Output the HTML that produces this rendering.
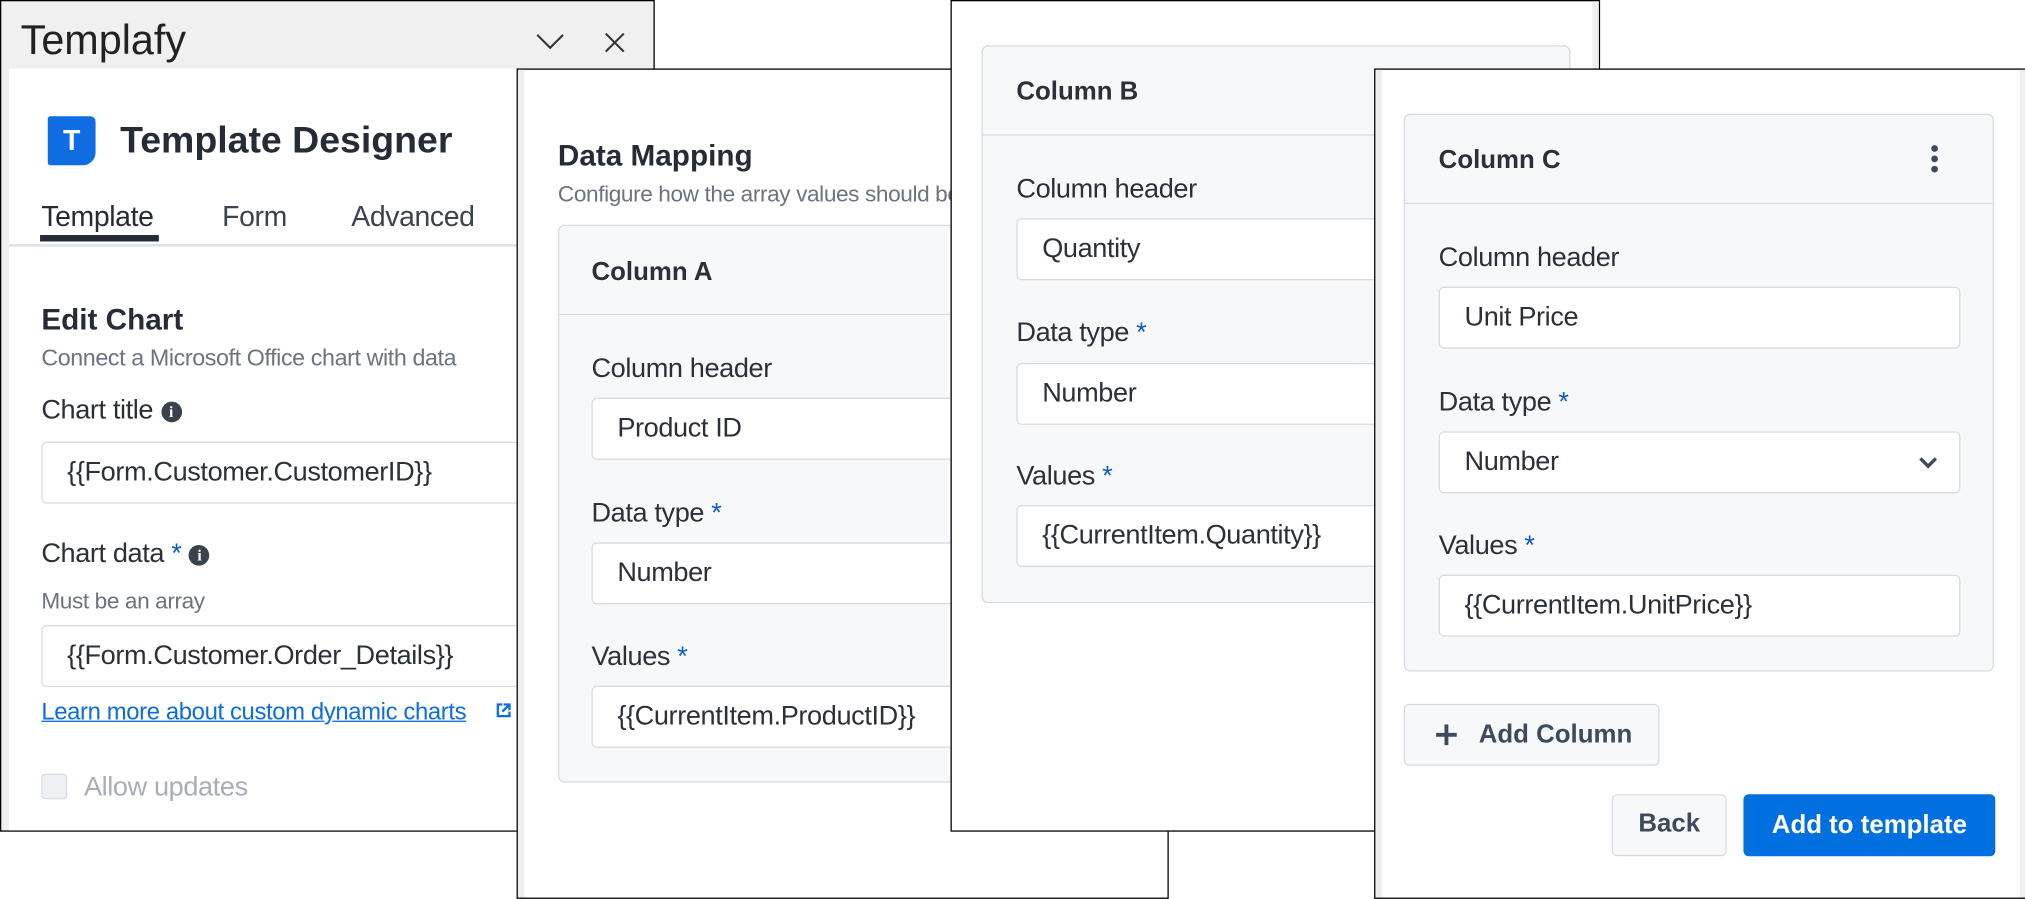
<!DOCTYPE html>
<html><head><meta charset="utf-8"><style>
*{box-sizing:border-box;margin:0;padding:0}
html,body{width:2025px;height:899px;background:#fff;overflow:hidden}
#w{position:absolute;left:0;top:0;width:1568px;height:696px;transform:scale(1.29145);transform-origin:0 0;font-family:"Liberation Sans",sans-serif;color:#2b3039}
.p{position:absolute;background:#fff;border:1px solid #000;overflow:hidden}
.a{position:absolute;white-space:nowrap}
.lbl{font-size:21px;line-height:22px;letter-spacing:-0.3px}
.req{color:#0b5cc4}
.inp{position:absolute;background:#fff;border:1.5px solid #d6dbe2;border-radius:4px;height:48px;font-size:21px;line-height:45px;padding-left:19px;white-space:nowrap;overflow:hidden;letter-spacing:-0.3px}
.card{position:absolute;background:#f7f8fa;border:1.5px solid #d6dbe2;border-radius:5px}
.hd{position:absolute;left:0;right:0;border-bottom:1.5px solid #d6dbe2}
.ttl{font-size:20px;font-weight:bold}
.info{display:inline-block;width:16px;height:16px;border-radius:50%;background:#3a424e;color:#fff;font-size:12px;line-height:16px;text-align:center;font-weight:bold;font-family:"Liberation Serif",serif;vertical-align:1px;margin-left:6px;letter-spacing:0}
.strip{position:absolute;top:0;bottom:0;width:5px;background:#efefef}
</style></head><body><div id="w">

<!-- Panel 1 -->
<div class="p" style="left:0;top:0;width:507px;height:644px;background:#f0f0f0">
  <div class="a" style="left:15px;top:12px;font-size:32px;line-height:36px;color:#222">Templafy</div>
  <svg class="a" style="left:414px;top:24px" width="22" height="14"><path d="M1 2 L11 12 L21 2" fill="none" stroke="#333" stroke-width="1.6"/></svg>
  <svg class="a" style="left:467px;top:24px" width="16" height="16"><path d="M1 1 L15 15 M15 1 L1 15" fill="none" stroke="#333" stroke-width="1.6"/></svg>
  <div class="a" style="left:6px;top:52px;width:500px;height:592px;background:#fff"></div>
  <div class="a" style="left:36px;top:89px;width:37px;height:38px;background:#0e6de0;border-radius:2px 4px 10px 2px;color:#fff;font-weight:bold;font-size:22px;line-height:38px;text-align:center">T</div>
  <div class="a" style="left:92px;top:91px;font-size:29px;line-height:34px;font-weight:bold;color:#262c36">Template Designer</div>
  <div class="a" style="left:31px;top:155px;font-size:22px;line-height:24px;color:#262c36;letter-spacing:-0.3px">Template</div>
  <div class="a" style="left:171px;top:155px;font-size:22px;line-height:24px;color:#3b4350;letter-spacing:-0.3px">Form</div>
  <div class="a" style="left:271px;top:155px;font-size:22px;line-height:24px;color:#3b4350;letter-spacing:-0.3px">Advanced</div>
  <div class="a" style="left:30px;top:181px;width:92px;height:5px;background:#262c36"></div>
  <div class="a" style="left:6px;top:188px;width:500px;height:2px;background:#dde2e8"></div>
  <div class="a" style="left:31px;top:232px;font-size:23px;line-height:28px;font-weight:bold;color:#262c36">Edit Chart</div>
  <div class="a" style="left:31px;top:266px;font-size:18px;line-height:20px;color:#6b7280;letter-spacing:-0.3px">Connect a Microsoft Office chart with data</div>
  <div class="a lbl" style="left:31px;top:306px">Chart title<span class="info">i</span></div>
  <div class="inp" style="left:31px;top:341px;width:400px">{{Form.Customer.CustomerID}}</div>
  <div class="a lbl" style="left:31px;top:417px">Chart data <span class="req">*</span><span class="info">i</span></div>
  <div class="a" style="left:31px;top:454px;font-size:17.5px;line-height:20px;color:#6b7280;letter-spacing:-0.3px">Must be an array</div>
  <div class="inp" style="left:31px;top:483px;width:400px">{{Form.Customer.Order_Details}}</div>
  <div class="a" style="left:31px;top:540px;font-size:18.5px;line-height:20px;color:#0b6ddf;text-decoration:underline;letter-spacing:-0.3px">Learn more about custom dynamic charts</div>
  <svg class="a" style="left:383px;top:543px" width="12" height="12"><path d="M5 1.5H1.5V10.5H10.5V7 M6 1.5H10.5V6 M10.5 1.5 L5 7" fill="none" stroke="#0b6ddf" stroke-width="1.8"/></svg>
  <div class="a" style="left:31px;top:598px;width:20px;height:20px;border:1.5px solid #d6dbe2;background:#eef0f3;border-radius:3px"></div>
  <div class="a" style="left:64px;top:597px;font-size:21px;line-height:24px;color:#a7aeb8;letter-spacing:-0.3px">Allow updates</div>
</div>

<!-- Panel 2 -->
<div class="p" style="left:400px;top:53px;width:505px;height:643px">
  <div class="strip" style="left:0"></div>
  <div class="a" style="left:31px;top:52px;font-size:23px;line-height:28px;font-weight:bold;color:#262c36">Data Mapping</div>
  <div class="a" style="left:31px;top:86px;font-size:17.5px;line-height:20px;color:#6b7280;letter-spacing:-0.3px">Configure how the array values should be mapped</div>
  <div class="card" style="left:31px;top:120px;width:500px;height:432px">
    <div class="hd" style="top:0;height:69px"></div>
    <div class="a ttl" style="left:25px;top:25px">Column A</div>
    <div class="a lbl" style="left:25px;top:100px">Column header</div>
    <div class="inp" style="left:25px;top:133px;width:460px">Product ID</div>
    <div class="a lbl" style="left:25px;top:212px">Data type <span class="req">*</span></div>
    <div class="inp" style="left:25px;top:245px;width:460px">Number</div>
    <div class="a lbl" style="left:25px;top:323px">Values <span class="req">*</span></div>
    <div class="inp" style="left:25px;top:356px;width:460px">{{CurrentItem.ProductID}}</div>
  </div>
</div>

<!-- Panel 3 -->
<div class="p" style="left:736px;top:0;width:503px;height:644px">
  <div class="strip" style="right:0"></div>
  <div class="card" style="left:23px;top:34px;width:456px;height:432px">
    <div class="hd" style="top:0;height:69px"></div>
    <div class="a ttl" style="left:26px;top:24px">Column B</div>
    <div class="a lbl" style="left:26px;top:100px">Column header</div>
    <div class="inp" style="left:26px;top:133px;width:404px">Quantity</div>
    <div class="a lbl" style="left:26px;top:211px">Data type <span class="req">*</span></div>
    <div class="inp" style="left:26px;top:245px;width:404px">Number</div>
    <div class="a lbl" style="left:26px;top:322px">Values <span class="req">*</span></div>
    <div class="inp" style="left:26px;top:355px;width:404px">{{CurrentItem.Quantity}}</div>
  </div>
</div>

<!-- Panel 4 -->
<div class="p" style="left:1064px;top:53px;width:505px;height:643px">
  <div class="strip" style="left:0"></div>
  <div class="strip" style="right:0;width:4px"></div>
  <div class="card" style="left:22px;top:34px;width:457px;height:432px">
    <div class="hd" style="top:0;height:69px"></div>
    <div class="a ttl" style="left:26px;top:24px">Column C</div>
    <svg class="a" style="left:406px;top:22px" width="8" height="26"><circle cx="4" cy="4" r="2.6" fill="#3e4a5c"/><circle cx="4" cy="12" r="2.6" fill="#3e4a5c"/><circle cx="4" cy="20" r="2.6" fill="#3e4a5c"/></svg>
    <div class="a lbl" style="left:26px;top:100px">Column header</div>
    <div class="inp" style="left:26px;top:133px;width:404px">Unit Price</div>
    <div class="a lbl" style="left:26px;top:212px">Data type <span class="req">*</span></div>
    <div class="inp" style="left:26px;top:245px;width:404px">Number</div>
    <svg class="a" style="left:397px;top:264px" width="16" height="11"><path d="M2 2 L8 8 L14 2" fill="none" stroke="#3e4a5c" stroke-width="2.6"/></svg>
    <div class="a lbl" style="left:26px;top:323px">Values <span class="req">*</span></div>
    <div class="inp" style="left:26px;top:356px;width:404px">{{CurrentItem.UnitPrice}}</div>
  </div>
  <div class="a" style="left:22px;top:491px;width:198px;height:48px;background:#f7f8fa;border:1.5px solid #d6dbe2;border-radius:4px"></div>
  <svg class="a" style="left:46px;top:506px" width="18" height="18"><path d="M9 1V17 M1 9H17" stroke="#3e4a5c" stroke-width="3"/></svg>
  <div class="a" style="left:80px;top:503px;font-size:20px;line-height:24px;font-weight:bold;color:#3e4a5c">Add Column</div>
  <div class="a" style="left:183px;top:561px;width:89px;height:48px;background:#f7f8fa;border:1.5px solid #d6dbe2;border-radius:4px;text-align:center;font-size:20px;line-height:45px;font-weight:bold;color:#3e4a5c">Back</div>
  <div class="a" style="left:285px;top:561px;width:195px;height:48px;background:#0070e0;border-radius:4px;text-align:center;font-size:20px;line-height:48px;font-weight:bold;color:#fff">Add to template</div>
</div>

</div></body></html>
